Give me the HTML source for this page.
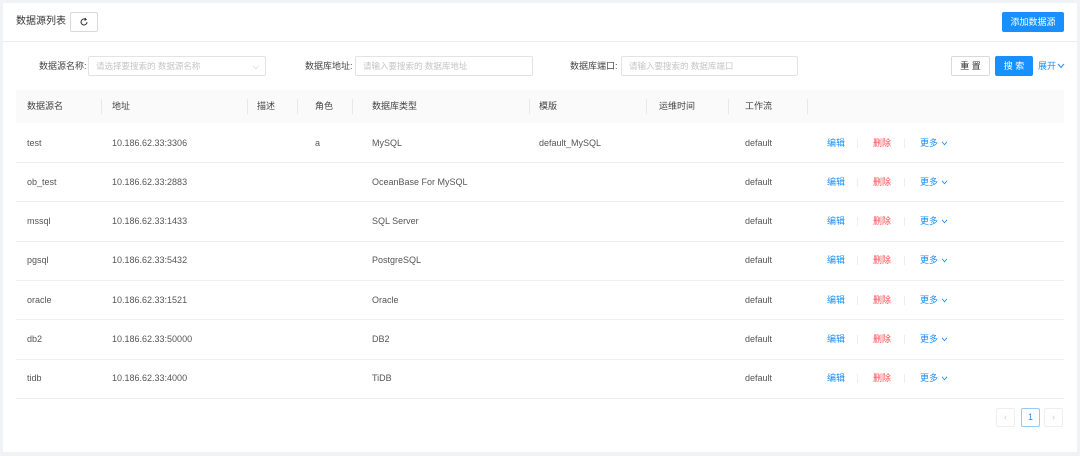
<!DOCTYPE html>
<html><head><meta charset="utf-8"><style>
*{box-sizing:border-box;margin:0;padding:0}
body{width:1080px;height:456px;background:#f0f2f5;font-family:"Liberation Sans","Noto Sans CJK SC",sans-serif;color:#555;font-size:9px;position:relative;overflow:hidden}
.card{position:absolute;left:3px;top:3px;width:1074px;height:449px;background:#fff}
.a{position:absolute;white-space:nowrap;line-height:11px}
.btn{position:absolute;border:1px solid #d9d9d9;border-radius:2px;background:#fff;display:flex;align-items:center;justify-content:center;line-height:11px}
.inp{position:absolute;border:1px solid #e3e3e3;border-radius:2px;height:20px;color:#c4c4c4;font-size:8.5px;padding-left:7px;line-height:18px}
.th{position:absolute;left:16px;top:90px;width:1048px;height:33px;background:#fafafa}
.sep{position:absolute;top:99px;width:1px;height:15px;background:#e8e8e8}
.row{position:absolute;left:16px;width:1048px;height:1px;background:#eee}
.blue{color:#1890ff}.red{color:#ff4d4f}
</style></head><body>
<div class="card"></div>
<div style="position:absolute;left:3px;top:41px;width:1074px;height:1px;background:#eee"></div>
<div class="a" style="left:16px;top:16px;font-size:10px;line-height:12px;color:#333">数据源列表</div>
<div class="btn" style="left:70px;top:12px;width:28px;height:20px"><svg width="10" height="10" viewBox="0 0 10 10"><path d="M8 5A3 3 0 1 1 6.5 2.4" fill="none" stroke="#333" stroke-width="1"/><path d="M5.8 1 L7.2 2.6 L5.5 3.4" fill="none" stroke="#333" stroke-width="1"/></svg></div>
<div class="btn" style="left:1002px;top:12px;width:62px;height:20px;background:#1890ff;border-color:#1890ff;color:#fff;font-size:9px">添加数据源</div>

<div class="a" style="left:39px;top:60.5px;color:#444">数据源名称:</div>
<div class="inp" style="left:88px;top:56px;width:178px">请选择要搜索的 数据源名称<span style="position:absolute;right:6px;top:0;color:#bbb">⌵</span></div>
<div class="a" style="left:305px;top:60.5px;color:#444">数据库地址:</div>
<div class="inp" style="left:355px;top:56px;width:178px">请输入要搜索的 数据库地址</div>
<div class="a" style="left:570px;top:60.5px;color:#444">数据库端口:</div>
<div class="inp" style="left:621px;top:56px;width:177px">请输入要搜索的 数据库端口</div>
<div class="btn" style="left:951px;top:56px;width:39px;height:20px;color:#333">重 置</div>
<div class="btn" style="left:995px;top:56px;width:38px;height:20px;background:#1890ff;border-color:#1890ff;color:#fff">搜 索</div>
<div class="a blue" style="left:1038px;top:60.5px">展开<svg width="8" height="6" viewBox="0 0 8 6" style="margin-left:1px"><path d="M1 1L4 4.5L7 1" fill="none" stroke="#1890ff"/></svg></div>

<div class="th"></div>
<div class="sep" style="left:101px"></div><div class="sep" style="left:247px"></div><div class="sep" style="left:297px"></div><div class="sep" style="left:352px"></div><div class="sep" style="left:529px"></div><div class="sep" style="left:646px"></div><div class="sep" style="left:728px"></div><div class="sep" style="left:807px"></div>
<div class="a" style="left:27px;top:100.5px;color:#444">数据源名</div>
<div class="a" style="left:112px;top:100.5px;color:#444">地址</div>
<div class="a" style="left:257px;top:100.5px;color:#444">描述</div>
<div class="a" style="left:315px;top:100.5px;color:#444">角色</div>
<div class="a" style="left:372px;top:100.5px;color:#444">数据库类型</div>
<div class="a" style="left:539px;top:100.5px;color:#444">模版</div>
<div class="a" style="left:659px;top:100.5px;color:#444">运维时间</div>
<div class="a" style="left:745px;top:100.5px;color:#444">工作流</div>

<div id="rows"></div>
<script>
var d=[["test","10.186.62.33:3306","a","MySQL","default_MySQL"],["ob_test","10.186.62.33:2883","","OceanBase For MySQL",""],["mssql","10.186.62.33:1433","","SQL Server",""],["pgsql","10.186.62.33:5432","","PostgreSQL",""],["oracle","10.186.62.33:1521","","Oracle",""],["db2","10.186.62.33:50000","","DB2",""],["tidb","10.186.62.33:4000","","TiDB",""]];
var h="";d.forEach(function(r,i){var y=137.5+i*39.3;
h+='<div class="a" style="left:27px;top:'+y+'px">'+r[0]+'</div><div class="a" style="left:112px;top:'+y+'px">'+r[1]+'</div><div class="a" style="left:315px;top:'+y+'px">'+r[2]+'</div><div class="a" style="left:372px;top:'+y+'px">'+r[3]+'</div><div class="a" style="left:539px;top:'+y+'px">'+r[4]+'</div><div class="a" style="left:745px;top:'+y+'px">default</div><div class="a blue" style="left:827px;top:'+y+'px">编辑</div><div class="a red" style="left:873px;top:'+y+'px">删除</div><div class="a blue" style="left:920px;top:'+y+'px">更多 <svg width="7" height="5" viewBox="0 0 8 6"><path d="M1 1L4 4.5L7 1" fill="none" stroke="#1890ff"/></svg></div><div style="position:absolute;left:857px;top:'+(y+1)+'px;width:1px;height:9px;background:#eee"></div><div style="position:absolute;left:904px;top:'+(y+1)+'px;width:1px;height:9px;background:#eee"></div><div class="row" style="top:'+(162+i*39.3)+'px"></div>';});
document.getElementById("rows").innerHTML=h;
</script>
<div class="btn" style="left:996px;top:408px;width:19px;height:19px;color:#ccc;border-color:#eee">‹</div>
<div class="btn" style="left:1021px;top:408px;width:19px;height:19px;color:#1890ff;border-color:#91caff">1</div>
<div class="btn" style="left:1044px;top:408px;width:19px;height:19px;color:#ccc;border-color:#eee">›</div>
</body></html>
